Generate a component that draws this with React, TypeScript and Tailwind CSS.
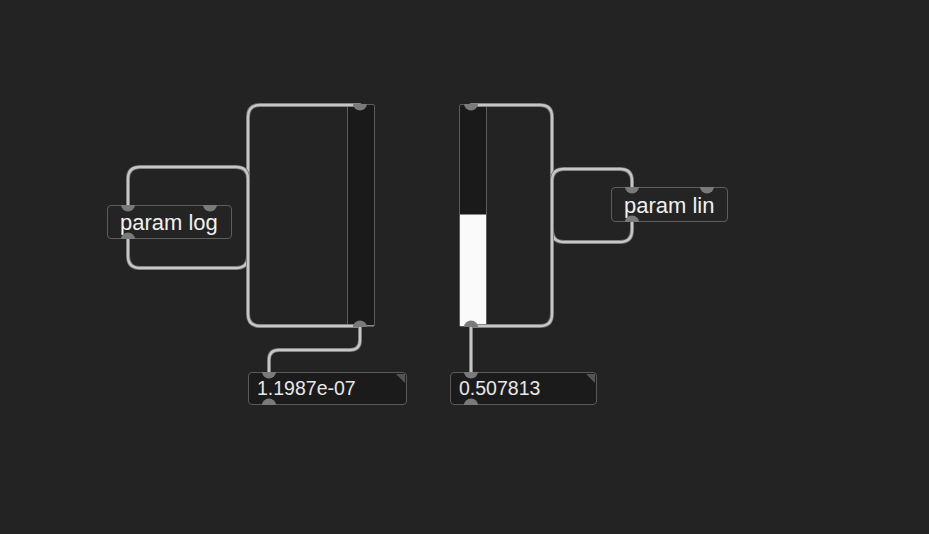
import React from "react";

// patch objects: sliders, param boxes and number boxes (placed on the patcher canvas)
const sliders = [
  { id: "sl1", pos: "left-[347px] top-[104px]", value: 1.1987e-7 },
  { id: "sl2", pos: "left-[459px] top-[104px]", value: 0.507813 },
];

const objects = [
  { id: "plog", pos: "left-[107px] top-[205px] w-[125px] h-[34px]", text: "param log" },
  { id: "plin", pos: "left-[611px] top-[187px] w-[117px] h-[35px]", text: "param lin" },
];

const numbers = [
  { id: "n1", pos: "left-[248px] top-[372px] w-[159px]", text: "1.1987e-07" },
  { id: "n2", pos: "left-[450px] top-[372px] w-[147px]", text: "0.507813" },
];

// patch cords, rounded at every bend
const cords = [
  "M128 239 V256 Q128 268 140 268 H236 Q248 268 248 256 V117 Q248 105 260 105 H360",
  "M360 326 H260 Q248 326 248 314 V179 Q248 167 236 167 H140 Q128 167 128 179 V206",
  "M360 327 V340 Q360 350 350 350 H279 Q269 350 269 360 V373",
  "M632 222 V230 Q632 242 620 242 H564 Q552 242 552 230 V117 Q552 105 540 105 H471",
  "M471 326 H540 Q552 326 552 314 V181 Q552 169 564 169 H620 Q632 169 632 181 V188",
  "M471 327 V373",
];

// inlets hang from the top edge, outlets sit on the bottom edge
const inlets = [
  [128, 205],
  [210, 205],
  [360, 104],
  [471, 104],
  [632, 187],
  [707, 187],
  [269, 372],
  [471, 372],
];
const outlets = [
  [128, 239],
  [360, 327],
  [471, 327],
  [632, 222],
  [269, 405],
  [471, 405],
];

const SLIDER_INNER = 221;

function Slider({ pos, value }: { pos: string; value: number }) {
  const fill = Math.round(SLIDER_INNER * value);
  return (
    <div
      className={`absolute ${pos} flex h-[223px] w-[28px] flex-col justify-end rounded-[2px] border border-[#5c5c5c] bg-[#1a1a1a]`}
    >
      <div className="w-full border-t border-[#8a8a8a] bg-[#fafafa]" style={{ height: fill }} />
    </div>
  );
}

export default function App() {
  return (
    <div className="relative h-[534px] w-[929px] overflow-hidden bg-[#232323] font-['Liberation_Sans',Arial,sans-serif]">
      {sliders.map((s) => (
        <Slider key={s.id} pos={s.pos} value={s.value} />
      ))}

      {objects.map((o) => (
        <div
          key={o.id}
          className={`absolute ${o.pos} flex items-center rounded-[4px] border border-[#5e5e5e] bg-[#242424] pl-[12px] pt-[2px] text-[22px] leading-none text-[#f0f0f0]`}
        >
          {o.text}
        </div>
      ))}

      {numbers.map((n) => (
        <div
          key={n.id}
          className={`absolute ${n.pos} flex h-[33px] items-center rounded-[4px] border border-[#5a5a5a] bg-[#1b1b1b] pl-[8px] pt-[1px] text-[19.5px] leading-none text-[#e8e8e8]`}
        >
          {n.text}
          <svg className="absolute right-[1px] top-[1px]" width="9" height="9" viewBox="0 0 9 9">
            <path d="M0 0 H9 V9 Z" fill="#555555" />
          </svg>
        </div>
      ))}

      <svg className="pointer-events-none absolute inset-0" width="929" height="534" viewBox="0 0 929 534">
        {cords.map((d, i) => (
          <g key={i} fill="none" strokeLinecap="round" strokeLinejoin="round">
            <path d={d} stroke="#6f6f6f" strokeWidth="4" />
            <path d={d} stroke="#c6c6c6" strokeWidth="2.4" />
          </g>
        ))}
        {inlets.map(([cx, cy], i) => (
          <path key={`i${i}`} d={`M${cx - 7} ${cy} A7 6.5 0 0 0 ${cx + 7} ${cy} Z`} fill="#7a7a7a" />
        ))}
        {outlets.map(([cx, cy], i) => (
          <path key={`o${i}`} d={`M${cx - 7} ${cy} A7 6.5 0 0 1 ${cx + 7} ${cy} Z`} fill="#7a7a7a" />
        ))}
      </svg>
    </div>
  );
}
